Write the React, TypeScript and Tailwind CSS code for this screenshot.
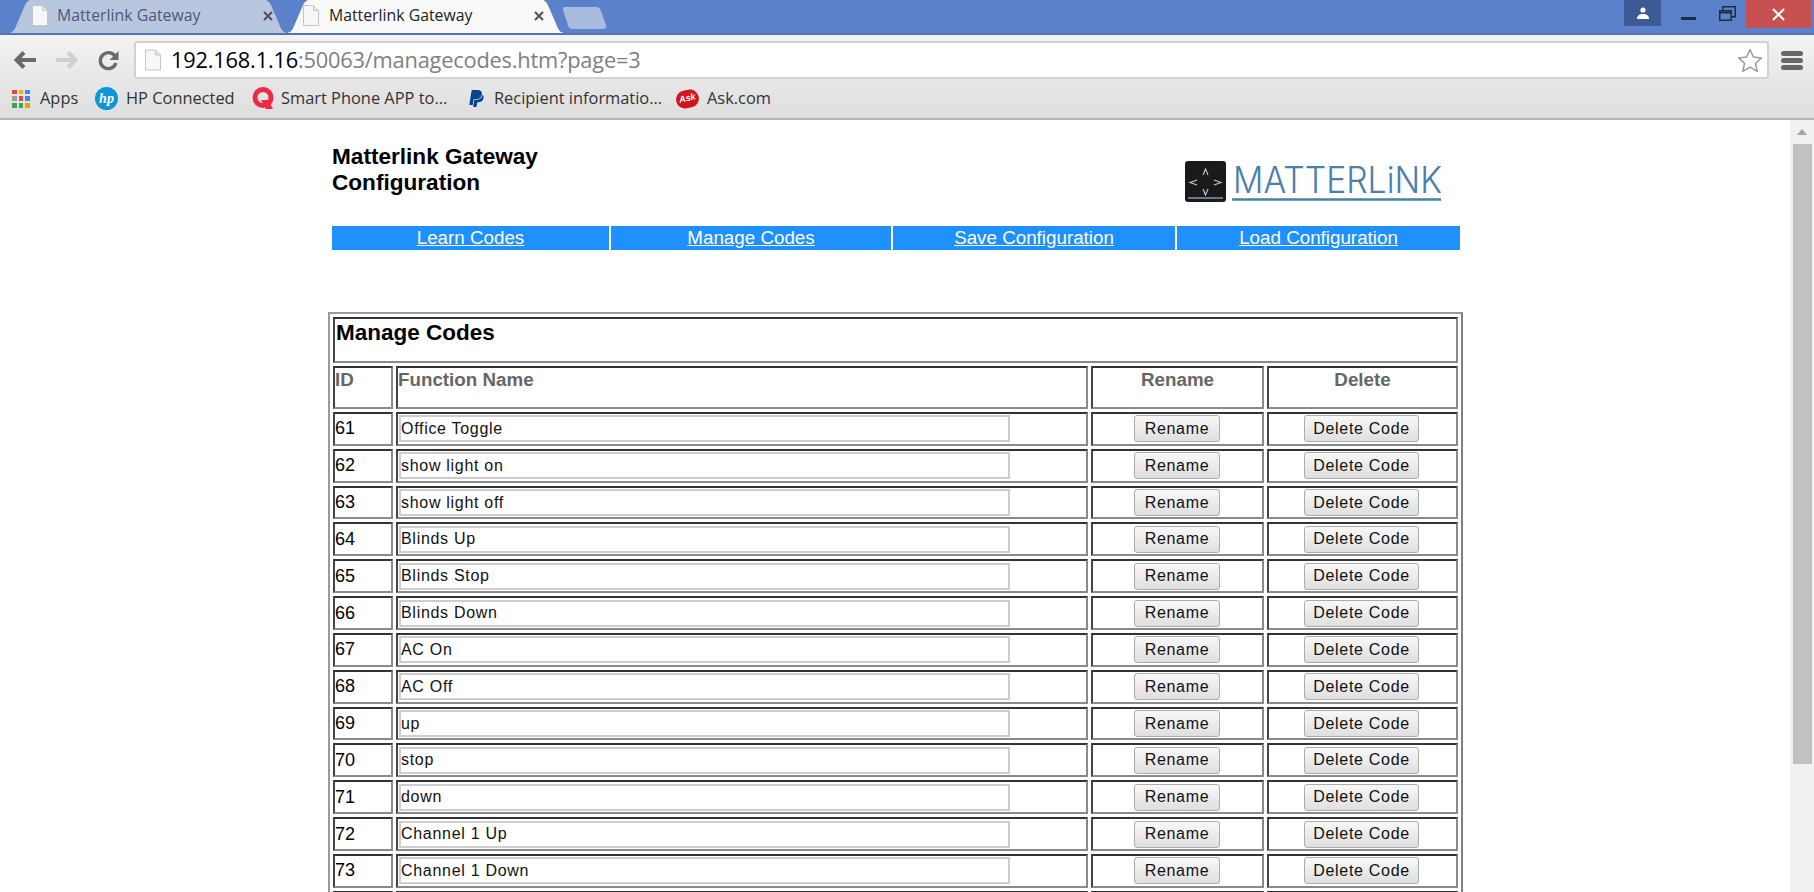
import { FaPaypal } from "react-icons/fa";

const CODES = [
  { id: 61, name: "Office Toggle" },
  { id: 62, name: "show light on" },
  { id: 63, name: "show light off" },
  { id: 64, name: "Blinds Up" },
  { id: 65, name: "Blinds Stop" },
  { id: 66, name: "Blinds Down" },
  { id: 67, name: "AC On" },
  { id: 68, name: "AC Off" },
  { id: 69, name: "up" },
  { id: 70, name: "stop" },
  { id: 71, name: "down" },
  { id: 72, name: "Channel 1 Up" },
  { id: 73, name: "Channel 1 Down" },
];

const CELL = "border-2 border-t-[#333333] border-l-[#444444] border-r-[#8a8a8a] border-b-[#8a8a8a] p-0";

function PageIcon({ className }: { className: string }) {
  return (
    <svg viewBox="0 0 16 21" className={className}>
      <path d="M0.5 0.5H10.5L15.5 5.5V20.5H0.5Z" fill="#f7f7f7" stroke="#c4c4c4" />
      <path d="M10.5 0.5V5.5H15.5" fill="#e4e4e4" stroke="#c4c4c4" />
    </svg>
  );
}

function CloseX({ className }: { className: string }) {
  return (
    <svg viewBox="0 0 12 12" className={className}>
      <path d="M2 2L10 10M10 2L2 10" stroke="#555555" strokeWidth="2.2" />
    </svg>
  );
}

function TabShape({ fill }: { fill: string }) {
  return (
    <svg viewBox="0 0 278 34" preserveAspectRatio="none" className="absolute inset-0 h-full w-full">
      <path d="M0 34C4 34 6 32 8 27L17 6C19 2 22 0 28 0H250C256 0 259 2 261 6L270 27C272 32 274 34 278 34Z" fill={fill} />
    </svg>
  );
}

function Tab({ active }: { active?: boolean }) {
  return (
    <div className={active ? "relative z-10 -ml-[2px] h-[34px] w-[279px]" : "relative h-[34px] w-[280px]"}>
      <TabShape fill={active ? "#f9f9f9" : "#b9c6e0"} />
      <div className={active ? "relative flex h-full items-center pb-[1px] pl-[17px]" : "relative flex h-full items-center pb-[1px] pl-[24px]"}>
        <PageIcon className="h-[21px] w-[16px] shrink-0" />
        <span className={active ? "ml-[10px] w-[204px] text-[15.8px] text-[#222222]" : "ml-[9px] w-[205px] text-[15.8px] text-[#4c5a73]"}>
          Matterlink Gateway
        </span>
        <CloseX className="h-[12px] w-[12px] shrink-0" />
      </div>
    </div>
  );
}

function TitleBar() {
  return (
    <div className="flex h-[35px] items-end border-b-2 border-[#5474b5] bg-[#5c81cb] pl-[8px]">
      <Tab />
      <Tab active />
      <svg viewBox="0 0 44 22" className="mb-[4px] -ml-[2px] h-[22px] w-[44px]">
        <path d="M1 0H33C36 0 37 1 38 4L43 18C44 21 42 22 40 22H10C7 22 6 21 5 18L0 3C0 1 0 0 1 0Z" fill="#a9bbde" />
      </svg>
      <div className="flex-1" />
      <div className="mb-[7px] flex h-[26px] w-[37px] items-center justify-center self-start bg-[#3c5a93]">
        <svg viewBox="0 0 14 12" className="h-[12px] w-[14px]">
          <circle cx="7" cy="3" r="2.6" fill="#ffffff" />
          <path d="M1 12C1 8 4 7 7 7C10 7 13 8 13 12Z" fill="#ffffff" />
        </svg>
      </div>
      <div className="ml-[20px] mb-[13px] h-[3px] w-[15px] bg-[#222c3f]" />
      <svg viewBox="0 0 17 15" className="ml-[23px] mb-[12px] h-[15px] w-[17px]">
        <path d="M0.75 4.75H12.25V14.25H0.75Z" fill="none" stroke="#222c3f" strokeWidth="1.5" />
        <path d="M0.75 6.5H12.25" stroke="#222c3f" strokeWidth="2" />
        <path d="M3.75 4V0.75H16.25V10.75H12.5" fill="none" stroke="#222c3f" strokeWidth="1.5" />
      </svg>
      <div className="mr-[3px] mb-[5px] ml-[10px] flex h-[28px] w-[65px] items-center justify-center self-start bg-[#c75050]">
        <svg viewBox="0 0 14 14" className="h-[13px] w-[13px]">
          <path d="M1 1L13 13M13 1L1 13" stroke="#ffffff" strokeWidth="2.2" />
        </svg>
      </div>
    </div>
  );
}

function NavIcons() {
  return (
    <div className="flex w-[134px] shrink-0 items-center pl-[14px]">
      <svg viewBox="0 0 23 18" className="h-[18px] w-[23px]">
        <path d="M10 1.5L2.5 9L10 16.5M3 9H22" fill="none" stroke="#6a6a6a" strokeWidth="4" />
      </svg>
      <svg viewBox="0 0 23 18" className="ml-[18px] h-[18px] w-[23px]">
        <path d="M13 1.5L20.5 9L13 16.5M20 9H1" fill="none" stroke="#cfcfcf" strokeWidth="4" />
      </svg>
      <svg viewBox="0 0 21 21" className="ml-[20px] h-[21px] w-[21px]">
        <path d="M17.5 7A8 8 0 1 0 18 13" fill="none" stroke="#6a6a6a" strokeWidth="3.4" />
        <path d="M20.5 1V10H11.5Z" fill="#6a6a6a" />
      </svg>
    </div>
  );
}

function AddressBar() {
  return (
    <div className="flex h-[38px] w-[1635px] items-center rounded-[3px] border-2 border-[#d2d2d2] bg-white pl-[9px]">
      <PageIcon className="h-[22px] w-[16px] shrink-0" />
      <span className="ml-[10px] text-[21.8px] tracking-[-0.2px] text-[#808080]">
        <span className="text-black">192.168.1.16</span>:50063/managecodes.htm?page=3
      </span>
      <div className="flex-1" />
      <svg viewBox="0 0 26 25" className="mr-[4px] h-[25px] w-[26px]">
        <path d="M13 1.5L16.4 9L24.5 9.9L18.5 15.3L20.2 23.3L13 19.2L5.8 23.3L7.5 15.3L1.5 9.9L9.6 9Z" fill="#ffffff" stroke="#9a9a9a" strokeWidth="1.5" strokeLinejoin="round" />
      </svg>
    </div>
  );
}

function AppsIcon() {
  const colors = ["#e64a3b", "#f5b400", "#4285f4", "#9e9e9e", "#e64a3b", "#4285f4", "#34a853", "#34a853", "#f59b00"];
  return (
    <div className="grid h-[18px] w-[18px] grid-cols-3 gap-[2px]">
      {colors.map((c, i) => (
        <div key={i} className="h-full w-full" style={{ backgroundColor: c }} />
      ))}
    </div>
  );
}

function Bookmarks() {
  const label = "text-[16.4px] text-[#333333] whitespace-nowrap";
  return (
    <div className="flex h-[40px] items-center pl-[12px] pb-[1px]">
      <AppsIcon />
      <span className={`ml-[10px] w-[55px] ${label}`}>Apps</span>
      <div className="flex h-[23px] w-[23px] items-center justify-center rounded-full bg-[#0d96d6] font-['Liberation_Serif',serif] text-[14px] font-bold italic text-white">
        hp
      </div>
      <span className={`ml-[8px] w-[126px] ${label}`}>HP Connected</span>
      <svg viewBox="0 0 22 24" className="h-[24px] w-[22px]">
        <circle cx="11" cy="10.5" r="8" fill="none" stroke="#ee2a44" strokeWidth="5" />
        <path d="M9 13L14 22H21L16 13Z" fill="#ee2a44" />
      </svg>
      <span className={`ml-[7px] w-[187px] ${label}`}>Smart Phone APP to...</span>
      <FaPaypal className="h-[19px] w-[17px] text-[#00468c]" />
      <span className={`ml-[9px] w-[182px] ${label}`}>Recipient informatio...</span>
      <div className="flex h-[18px] w-[23px] -rotate-12 items-center justify-center rounded-full bg-[#d0161b] font-['Liberation_Sans',sans-serif] text-[9px] font-bold italic text-white">
        Ask
      </div>
      <span className={`ml-[8px] ${label}`}>Ask.com</span>
    </div>
  );
}

function Toolbar() {
  return (
    <div className="h-[85px] border-b-2 border-[#b4b4b4] bg-gradient-to-b from-[#f3f3f3] to-[#dedede] pt-[6px]">
      <div className="flex items-center">
        <NavIcons />
        <AddressBar />
        <div className="ml-[12px] flex w-[22px] flex-col gap-[2px]">
          <div className="h-[5px] rounded-full bg-[#666666]" />
          <div className="h-[5px] rounded-full bg-[#666666]" />
          <div className="h-[5px] rounded-full bg-[#666666]" />
        </div>
      </div>
      <Bookmarks />
    </div>
  );
}

function Logo() {
  return (
    <svg viewBox="0 0 259 43" className="mt-[40px] mr-[18px] h-[43px] w-[259px] overflow-visible">
      <rect x="2" y="1" width="41" height="41" rx="3" fill="#1a1a1a" />
      <path d="M20 15L22.5 9L25 15M20 29L22.5 35L25 29M14 20L7 22.5L14 25M31 20L38 22.5L31 25" fill="none" stroke="#c9c9c9" strokeWidth="1.1" />
      <path d="M5 38H40" stroke="#7f97bd" strokeWidth="1.6" />
      <text x="50" y="33" textLength="209" lengthAdjust="spacingAndGlyphs" fontFamily="Inter, 'Liberation Sans', sans-serif" fontWeight="300" fontSize="37" fill="#4a80ad">
        MATTERLiNK
      </text>
      <path d="M49 39.5H258" stroke="#4a80ad" strokeWidth="2.4" />
    </svg>
  );
}

function NavLinks() {
  const links = [
    { label: "Learn Codes", width: "w-[277px]" },
    { label: "Manage Codes", width: "w-[280px]" },
    { label: "Save Configuration", width: "w-[282px]" },
    { label: "Load Configuration", width: "w-[283px]" },
  ];
  return (
    <div className="ml-[332px] flex h-[24px] w-[1128px] justify-between">
      {links.map((l) => (
        <a key={l.label} href="#" className={`${l.width} bg-[#1e90ff] text-center text-[18.8px] leading-[24px] text-white underline`}>
          {l.label}
        </a>
      ))}
    </div>
  );
}

function CodesTable() {
  return (
    <table className="ml-[328px] mt-[62px] w-[1135px] table-fixed border-separate border-spacing-[3px] border-2 border-t-[#9a9a9a] border-l-[#9a9a9a] border-r-[#808080] border-b-[#808080]">
      <colgroup>
        <col className="w-[60px]" />
        <col className="w-[692px]" />
        <col className="w-[173px]" />
        <col className="w-[191px]" />
      </colgroup>
      <thead>
        <tr>
          <th colSpan={4} className={`${CELL} h-[46px] pl-[1px] align-top`}>
            <div className="text-left text-[22.5px] leading-[28px] font-bold text-black">Manage Codes</div>
          </th>
        </tr>
        <tr className="align-top text-[18.8px] leading-[24px] font-bold text-[#666666]">
          <th className={`${CELL} h-[43px] text-left`}>ID</th>
          <th className={`${CELL} text-left`}>Function Name</th>
          <th className={`${CELL} text-center`}>Rename</th>
          <th className={`${CELL} text-center`}>Delete</th>
        </tr>
      </thead>
      <tbody>
        {CODES.map((c) => (
          <tr key={c.id}>
            <td className={`${CELL} h-[33.83px] text-[18px] text-black`}>{c.id}</td>
            <td className={CELL}>
              <input
                readOnly
                defaultValue={c.name}
                className="ml-[1px] block h-[27px] w-[611px] border-2 border-[#cdcdcd] bg-white pl-0 text-[16px] tracking-[0.7px] text-[#111111]"
              />
            </td>
            <td className={`${CELL} text-center`}>
              <button className="mr-[1px] h-[27px] w-[86px] rounded-[3px] border border-[#acacac] bg-gradient-to-b from-[#f8f8f8] to-[#dfdfdf] text-[16px] tracking-[0.7px] text-[#111111]">
                Rename
              </button>
            </td>
            <td className={`${CELL} text-center`}>
              <button className="mr-[2px] h-[27px] w-[115px] rounded-[3px] border border-[#acacac] bg-gradient-to-b from-[#f8f8f8] to-[#dfdfdf] text-[16px] tracking-[0.7px] text-[#111111]">
                Delete Code
              </button>
            </td>
          </tr>
        ))}
        <tr>
          <td className={`${CELL} h-[33.83px]`} />
          <td className={CELL} />
          <td className={CELL} />
          <td className={CELL} />
        </tr>
      </tbody>
    </table>
  );
}

function Scrollbar() {
  return (
    <div className="flex w-[24px] shrink-0 flex-col items-end bg-[#f1f1f1]">
      <div className="flex h-[24px] w-[24px] items-center justify-center">
        <svg viewBox="0 0 10 6" className="h-[6px] w-[10px]">
          <path d="M5 0L10 6H0Z" fill="#a3a3a3" />
        </svg>
      </div>
      <div className="mr-[2px] h-[620px] w-[19px] bg-[#c1c1c1]" />
    </div>
  );
}

export default function App() {
  return (
    <div className="flex h-[892px] w-[1814px] flex-col overflow-hidden bg-white font-['Liberation_Sans',Arial,sans-serif]">
      <div className="font-['Open_Sans','Noto_Sans',sans-serif]">
        <TitleBar />
        <Toolbar />
      </div>
      <div className="flex min-h-0 flex-1">
        <main className="min-w-0 flex-1 overflow-hidden">
          <div className="ml-[332px] flex h-[106px] w-[1128px] items-start justify-between">
            <h1 className="mt-[24px] text-[22.6px] leading-[25.5px] font-bold text-black">
              Matterlink Gateway
              <br />
              Configuration
            </h1>
            <Logo />
          </div>
          <NavLinks />
          <CodesTable />
        </main>
        <Scrollbar />
      </div>
    </div>
  );
}
